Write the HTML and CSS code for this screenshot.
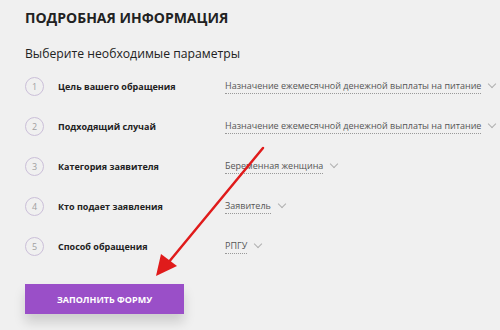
FILE: index.html
```html
<!DOCTYPE html>
<html lang="ru">
<head>
    <meta charset="UTF-8">
    <title>Подробная информация</title>
    <link rel="stylesheet" href="styles.css">
</head>
<body>
    <div class="page">
        <h1>Подробная информация</h1>
        <h2>Выберите необходимые параметры</h2>

        <!-- Parameter rows -->
        <div class="params">
            <div class="row">
                <span class="num">1</span>
                <span class="label">Цель вашего обращения</span>
                <span class="value"><span class="text">Назначение ежемесячной денежной выплаты на питание</span><span class="chevron"></span></span>
            </div>
            <div class="row">
                <span class="num">2</span>
                <span class="label">Подходящий случай</span>
                <span class="value"><span class="text">Назначение ежемесячной денежной выплаты на питание</span><span class="chevron"></span></span>
            </div>
            <div class="row">
                <span class="num">3</span>
                <span class="label">Категория заявителя</span>
                <span class="value"><span class="text">Беременная женщина</span><span class="chevron"></span></span>
            </div>
            <div class="row">
                <span class="num">4</span>
                <span class="label">Кто подает заявления</span>
                <span class="value"><span class="text">Заявитель</span><span class="chevron"></span></span>
            </div>
            <div class="row">
                <span class="num">5</span>
                <span class="label">Способ обращения</span>
                <span class="value"><span class="text">РПГУ</span><span class="chevron"></span></span>
            </div>
        </div>

        <button class="submit">Заполнить форму</button>

        <!-- Red pointer arrow drawn over the page -->
        <svg class="arrow" width="500" height="330" viewBox="0 0 500 330">
            <line x1="263" y1="148" x2="168" y2="263" stroke="#e01b1b" stroke-width="2.5" stroke-linecap="round"/>
            <polygon points="156,276 161,254 177,266" fill="#e01b1b"/>
        </svg>
    </div>
</body>
</html>
```

FILE: styles.css
```css
/* Basic styling */
body {
    margin: 0;
    background-color: #f0f0f0;
    font-family: "Open Sans", Arial, sans-serif;
    color: #222;
}

.page {
    position: relative;
    width: 500px;
    height: 330px;
    box-sizing: border-box;
    padding: 8px 25px 0;
}

h1 {
    margin: 0;
    font-size: 14px;
    font-weight: 700;
    text-transform: uppercase;
    line-height: 20px;
}

h2 {
    margin: 16px 0 0;
    font-size: 12.2px;
    font-weight: 400;
    line-height: 20px;
}

/* Parameter rows */
.params {
    margin-top: 2px;
}

.row {
    display: grid;
    grid-template-columns: 33px 167px 1fr;
    align-items: center;
    height: 40px;
}

.num {
    width: 17px;
    height: 17px;
    border: 1px solid #cbbfd9;
    border-radius: 50%;
    display: flex;
    justify-content: center;
    align-items: center;
    font-size: 9px;
    color: #a0a0a0;
}

.label {
    font-size: 9px;
    font-weight: 700;
    color: #222;
}

.value {
    display: flex;
    align-items: center;
    white-space: nowrap;
    font-size: 9px;
    color: #555;
}

.text {
    border-bottom: 1px dotted #999;
    line-height: 14px;
}

.chevron {
    width: 5px;
    height: 5px;
    margin: -4px 0 0 8px;
    border-right: 1px solid #b0b0b0;
    border-bottom: 1px solid #b0b0b0;
    transform: rotate(45deg);
}

/* Main button */
.submit {
    margin-top: 18px;
    width: 159px;
    height: 30px;
    border: none;
    background: #9a4fc8;
    color: #fff;
    font-family: "Open Sans", Arial, sans-serif;
    font-size: 9px;
    font-weight: 700;
    text-transform: uppercase;
    box-shadow: 0 8px 12px rgba(0, 0, 0, 0.15);
    cursor: pointer;
}

.arrow {
    position: absolute;
    top: 0;
    left: 0;
    pointer-events: none;
}
```
